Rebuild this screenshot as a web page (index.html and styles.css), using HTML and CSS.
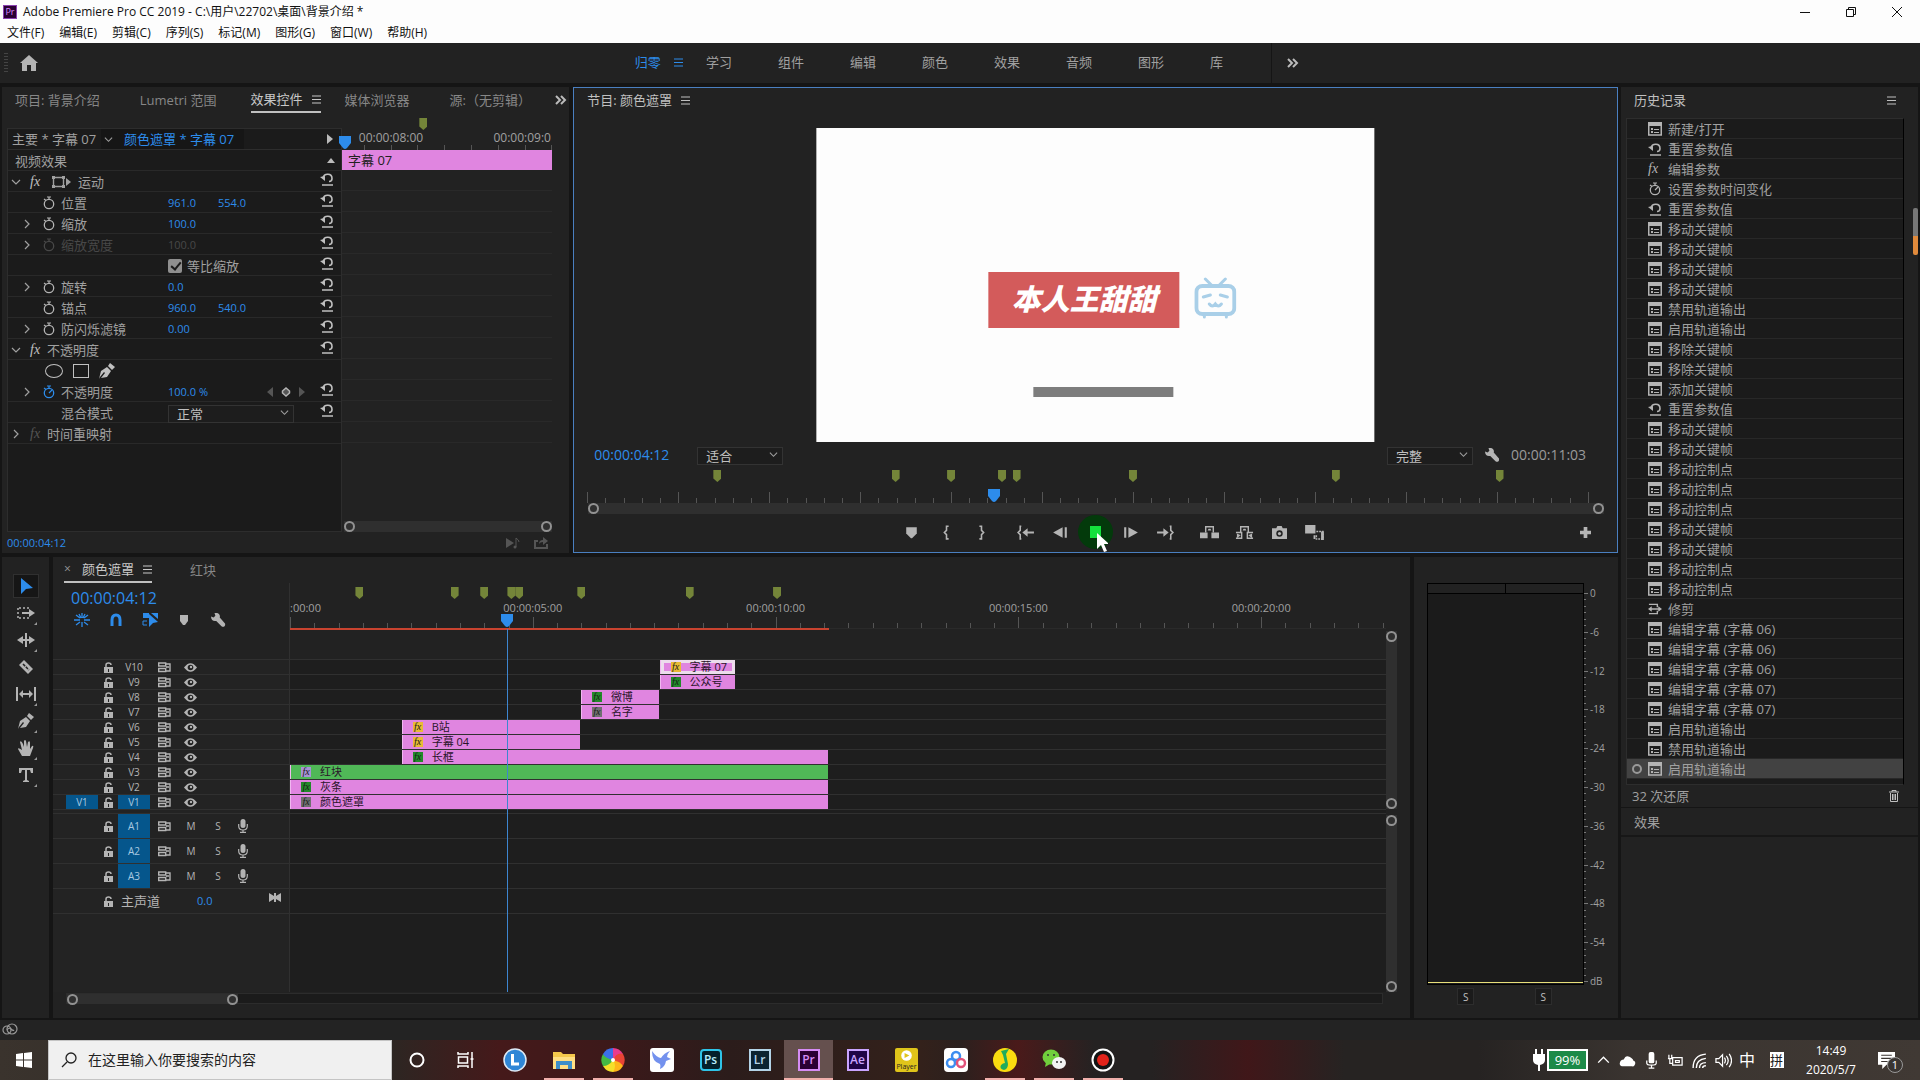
FILE: index.html
```html
<!DOCTYPE html>
<html lang="zh-CN">
<head>
  <meta charset="UTF-8" />
  <meta name="viewport" content="width=device-width, initial-scale=1.0"/>
  <title>Adobe Premiere Pro CC 2019</title>
  <link rel="stylesheet" href="styles.css">
</head>
<body>

  <!-- ICONOS -->
  <svg class="sprite" aria-hidden="true">
    <symbol id="i-menu" viewBox="0 0 9 9"><path d="M0 1h9M0 4.5h9M0 8h9" fill="none" stroke="currentColor"/></symbol>
    <symbol id="i-more" viewBox="0 0 12 10"><path d="M1 1l4 4-4 4M6 1l4 4-4 4" fill="none" stroke="currentColor" stroke-width="2"/></symbol>
    <symbol id="i-down" viewBox="0 0 10 10"><path d="M1 3l4 4 4-4" fill="none" stroke="currentColor" stroke-width="1.2"/></symbol>
    <symbol id="i-right" viewBox="0 0 10 10"><path d="M3 1l4 4-4 4" fill="none" stroke="currentColor" stroke-width="1.2"/></symbol>
    <symbol id="i-reset" viewBox="0 0 14 14"><path d="M3 6C4 1 12 1 12 6.500c0 2-1.500 3-3 3M2 13h11" fill="none" stroke="currentColor" stroke-width="1.600"/><path d="M0 5l5-1v5z" fill="currentColor"/></symbol>
    <symbol id="i-watch" viewBox="0 0 14 14"><circle cx="7" cy="8" r="4.700" fill="none" stroke="currentColor" stroke-width="1.300"/><path d="M5 1h4M7 1v3M2 3l2 1.500M7 8l3-3" fill="none" stroke="currentColor" stroke-width="1.200"/></symbol>
    <symbol id="i-clock" viewBox="0 0 14 14"><circle cx="7" cy="8" r="4.700" fill="none" stroke="currentColor" stroke-width="1.300"/><path d="M5 1h4M7 1v3M2 3l2 1.500" fill="none" stroke="currentColor" stroke-width="1.200"/></symbol>
    <symbol id="i-motion" viewBox="0 0 20 14"><path d="M2.500 2.500h10v9h-10z" fill="none" stroke="currentColor" stroke-width="1.400"/><path d="M1 1h3v3H1zM11 1h3v3h-3zM1 10h3v3H1zM11 10h3v3h-3zM15 3l5 4-5 4z" fill="currentColor"/></symbol>
    <symbol id="i-pen" viewBox="0 0 16 16"><path d="M0 16l2-8 6-4 4 4-4 6-6 1 4-5-1-1-4 5z" fill="currentColor"/><path d="M9 3l2-3 5 4-3 3z" fill="currentColor"/></symbol>
    <symbol id="i-wrench" viewBox="0 0 16 16"><path d="M0 4l3 1 2-2-1-3c4-1 7 2 6 5l6 7c1 3-2 5-4 3L6 9C3 10 0 8 0 4z" fill="currentColor"/></symbol>
    <symbol id="i-marker" viewBox="0 0 12 13"><path d="M0 0h12v7l-4 5q-2 2-4 0L0 7z" fill="currentColor"/></symbol>
    <symbol id="i-panel" viewBox="0 0 14 14"><path d="M.75 1h12.500v12H.75z" fill="none" stroke="currentColor" stroke-width="1.500"/><path d="M0 0h14v4H0zM3 6h2v2H3zM3 9h2v2H3zM6 7h5v1H6zM6 10h5v1H6z" fill="currentColor"/></symbol>
    <symbol id="i-trim" viewBox="0 0 15 14"><path d="M1 2h9v3M1 12h9V9M3 7h9" fill="none" stroke="currentColor" stroke-width="1.500"/><path d="M0 7l4-3v6zM15 7l-4-3v6z" fill="currentColor"/></symbol>
    <symbol id="i-lock" viewBox="0 0 9 11"><path d="M2 5V3q0-2 2.500-2T7 3" fill="none" stroke="currentColor" stroke-width="1.500"/><path d="M0 5h9v6H0z" fill="currentColor"/><path d="M4 7h1v3H4z" fill="#222"/></symbol>
    <symbol id="i-sync" viewBox="0 0 13 11"><path d="M.7 1h7v3h-7zM.7 6.500h7v3h-7zM8 2h4v7H8M8 5h3" fill="none" stroke="currentColor" stroke-width="1.400"/></symbol>
    <symbol id="i-eye" viewBox="0 0 13 9"><path d="M0 4.500Q6.500-4 13 4.500Q6.500 13 0 4.500z" fill="currentColor"/><circle cx="6.500" cy="4.500" r="2.800" fill="#222"/><circle cx="7" cy="4" r="1.200" fill="currentColor"/></symbol>
    <symbol id="i-mic" viewBox="0 0 10 14"><rect x="2.500" width="5" height="9" rx="2.500" fill="currentColor"/><path d="M.7 5v2q0 4 4.300 4t4.300-4V5M5 11v2M2 13.300h6" fill="none" stroke="currentColor" stroke-width="1.200"/></symbol>
    <symbol id="i-bilibili" viewBox="0 0 42 42"><g fill="none" stroke="#a9cfe8" stroke-width="4" stroke-linecap="round"><rect x="2" y="9" width="38" height="28" rx="6"/><path d="M11 2l6 6M31 2l-6 6M9 20l7-2M33 20l-7-2M15 27q3 4 6 0q3 4 6 0M10 40v-1M32 40v-1" stroke-width="3"/></g></symbol>
  </svg>

  <!-- VENTANA -->
  <header class="window-bar">
    <div class="title-row">
      <span class="app-logo">Pr</span>
      <span class="title">Adobe Premiere Pro CC 2019 - C:\用户\22702\桌面\背景介绍 *</span>
      <div class="window-buttons">
        <button aria-label="最小化"><svg viewBox="0 0 10 10"><path d="M0 5.500h10"/></svg></button>
        <button aria-label="还原"><svg viewBox="0 0 10 10"><path d="M.5 2.500h7v7h-7zM2.500 2.500v-2h7v7h-2"/></svg></button>
        <button aria-label="关闭"><svg viewBox="0 0 10 10"><path d="M0 0l10 10M10 0L0 10"/></svg></button>
      </div>
    </div>
    <nav class="menu-row">
      <button>文件(F)</button><button>编辑(E)</button><button>剪辑(C)</button><button>序列(S)</button><button>标记(M)</button><button>图形(G)</button><button>窗口(W)</button><button>帮助(H)</button>
    </nav>
  </header>

  <div class="workspace-bar">
    <span class="grip"></span>
    <button class="home" aria-label="主页"><svg viewBox="0 0 18 16"><path d="M9 0l9 8h-2v8h-5v-6H7v6H2V8H0z" fill="currentColor"/></svg></button>
    <nav class="workspaces">
      <button class="active">归零 <svg><use href="#i-menu"/></svg></button>
      <button>学习</button><button>组件</button><button>编辑</button><button>颜色</button><button>效果</button><button>音频</button><button>图形</button><button>库</button>
    </nav>
    <button class="more" aria-label="更多"><svg><use href="#i-more"/></svg></button>
  </div>

  <main class="workspace">
    <div class="left-side">
      <div class="top-row">

        <!-- CONTROLES DE EFECTOS -->
        <section class="panel effects">
          <div class="tabs">
            <button>项目: 背景介绍</button>
            <button>Lumetri 范围</button>
            <button class="active">效果控件 <svg><use href="#i-menu"/></svg></button>
            <button>媒体浏览器</button>
            <button class="source">源:（无剪辑）</button>
            <svg class="more-tabs"><use href="#i-more"/></svg>
          </div>
          <div class="effects-body">
            <div class="props">
              <div class="props-head">
                <span class="master">主要 * 字幕 07</span>
                <span class="clip-name"><svg><use href="#i-down"/></svg>颜色遮罩 * 字幕 07</span>
                <span class="tri-right"></span>
              </div>
              <div class="props-row section"><span>视频效果</span><span class="tri-up"></span></div>
              <div class="props-row group"><svg class="arrow"><use href="#i-down"/></svg><i class="fx">fx</i><svg class="motion"><use href="#i-motion"/></svg><span>运动</span><svg class="reset"><use href="#i-reset"/></svg></div>
              <div class="props-row"><svg class="arrow hidden"><use href="#i-right"/></svg><svg class="watch"><use href="#i-clock"/></svg><span class="label">位置</span><b>961.0</b><b>554.0</b><svg class="reset"><use href="#i-reset"/></svg></div>
              <div class="props-row"><svg class="arrow"><use href="#i-right"/></svg><svg class="watch"><use href="#i-clock"/></svg><span class="label">缩放</span><b>100.0</b><svg class="reset"><use href="#i-reset"/></svg></div>
              <div class="props-row off"><svg class="arrow"><use href="#i-right"/></svg><svg class="watch"><use href="#i-clock"/></svg><span class="label">缩放宽度</span><b>100.0</b><svg class="reset"><use href="#i-reset"/></svg></div>
              <div class="props-row"><label class="check"><input type="checkbox" checked>等比缩放</label><svg class="reset"><use href="#i-reset"/></svg></div>
              <div class="props-row"><svg class="arrow"><use href="#i-right"/></svg><svg class="watch"><use href="#i-clock"/></svg><span class="label">旋转</span><b>0.0</b><svg class="reset"><use href="#i-reset"/></svg></div>
              <div class="props-row"><svg class="arrow hidden"><use href="#i-right"/></svg><svg class="watch"><use href="#i-clock"/></svg><span class="label">锚点</span><b>960.0</b><b>540.0</b><svg class="reset"><use href="#i-reset"/></svg></div>
              <div class="props-row"><svg class="arrow"><use href="#i-right"/></svg><svg class="watch"><use href="#i-clock"/></svg><span class="label">防闪烁滤镜</span><b>0.00</b><svg class="reset"><use href="#i-reset"/></svg></div>
              <div class="props-row group"><svg class="arrow"><use href="#i-down"/></svg><i class="fx">fx</i><span>不透明度</span><svg class="reset"><use href="#i-reset"/></svg></div>
              <div class="props-row masks"><span class="mask-round"></span><span class="mask-box"></span><svg><use href="#i-pen"/></svg></div>
              <div class="props-row"><svg class="arrow"><use href="#i-right"/></svg><svg class="watch on"><use href="#i-watch"/></svg><span class="label">不透明度</span><b>100.0 %</b>
                <svg class="keys" viewBox="0 0 38 10"><path d="M6 0v10L0 5zM32 0v10l6-5z" fill="#555"/><path d="M15.500 4l3.500-3 3.500 3v2L19 9l-3.500-3z" fill="#555" stroke="#b5b5b5" stroke-width="1.500"/></svg>
                <svg class="reset"><use href="#i-reset"/></svg></div>
              <div class="props-row"><label class="label blend" for="blend">混合模式</label>
                <span class="select"><select id="blend"><option>正常</option></select><svg><use href="#i-down"/></svg></span>
                <svg class="reset"><use href="#i-reset"/></svg></div>
              <div class="props-row group off-fx"><svg class="arrow"><use href="#i-right"/></svg><i class="fx">fx</i><span>时间重映射</span></div>
            </div>
            <div class="keyframes">
              <div class="mini-ruler" id="miniRuler">
                <span class="stamp first">00:00:08:00</span><span class="stamp second">00:00:09:0</span>
              </div>
              <div class="mini-clip">字幕 07</div>
              <div class="key-lines"></div>
              <div class="hbar"><span></span><span></span></div>
            </div>
          </div>
          <div class="effects-foot">
            <span>00:00:04:12</span>
            <svg viewBox="0 0 14 12"><path d="M0 1l8 5-8 5z" fill="currentColor"/><path d="M10 10V1q3 2 3 4" fill="none" stroke="currentColor"/><circle cx="9" cy="10" r="1.500" fill="currentColor"/></svg>
            <svg viewBox="0 0 14 12"><path d="M4 4H1v7h12V7" fill="none" stroke="currentColor" stroke-width="2"/><path d="M5 7q0-4 4-4V0l5 4-5 4V5q-3 0-4 2z" fill="currentColor"/></svg>
          </div>
        </section>

        <!-- MONITOR DE PROGRAMA -->
        <section class="panel program">
          <div class="tabs"><button class="bright">节目: 颜色遮罩 <svg><use href="#i-menu"/></svg></button></div>
          <div class="screen">
            <svg viewBox="0 0 558 314">
              <rect width="558" height="314" fill="#fdfdfd"/>
              <rect x="172" y="144" width="191" height="56" fill="#d35b5b"/>
              <text x="268" y="182" class="caption">本人王甜甜</text>
              <use href="#i-bilibili" x="378" y="149" width="42" height="42"/>
              <rect x="217" y="259" width="140" height="10" fill="#7d7d7d"/>
            </svg>
          </div>
          <div class="info-row">
            <span class="timecode">00:00:04:12</span>
            <span class="select"><select aria-label="缩放级别"><option>适合</option></select><svg><use href="#i-down"/></svg></span>
            <span class="select end"><select aria-label="回放分辨率"><option>完整</option></select><svg><use href="#i-down"/></svg></span>
            <svg class="wrench"><use href="#i-wrench"/></svg>
            <span class="timecode duration">00:00:11:03</span>
          </div>
          <div class="ruler" id="programRuler"></div>
          <div class="hbar"><span></span><span></span></div>
          <div class="transport">
            <div class="transport-keys">
              <button aria-label="添加标记"><svg viewBox="0 0 18 14"><path d="M4 2h10v6l-4 4q-1 1-2 0L4 8z"/></svg></button>
              <button aria-label="标记入点"><svg viewBox="0 0 18 14"><path d="M11 1H9v4L7 7l2 2v4h2" class="line"/></svg></button>
              <button aria-label="标记出点" class="wide-r"><svg viewBox="0 0 18 14"><path d="M7 1h2v4l2 2-2 2v4H7" class="line"/></svg></button>
              <button aria-label="转到入点"><svg viewBox="0 0 18 14"><path d="M5 1H4v4L2 7l2 2v4h1" class="line"/><path d="M6 7l5-4v3h6v2h-6v3z"/></svg></button>
              <button aria-label="后退一帧"><svg viewBox="0 0 18 14"><path d="M11 2v10L2 7zM13 2h2v10h-2z"/></svg></button>
              <button aria-label="停止" class="stop"><span></span><svg viewBox="0 0 12 19"><path d="M1 0v16l4-4 3 7 3-1-3-7h5z"/></svg></button>
              <button aria-label="前进一帧"><svg viewBox="0 0 18 14"><path d="M7 2v10l9-5zM3 2h2v10H3z"/></svg></button>
              <button aria-label="转到出点"><svg viewBox="0 0 18 14"><path d="M13 1h1v4l2 2-2 2v4h-1" class="line"/><path d="M12 7L7 3v3H1v2h6v3z"/></svg></button>
              <button aria-label="提升" class="wide-l"><svg viewBox="0 0 20 14"><path d="M0 7h8v6H0zM12 7h8v6h-8zM9 3h2l1 2H8z"/><path d="M6 7V1h8v6" class="line"/></svg></button>
              <button aria-label="提取"><svg viewBox="0 0 20 14"><path d="M9 3h2l1 2H8zM2 8l4 2-4 3zM18 8l-4 2 4 3z"/><path d="M6 7V1h8v6M1 7h6v6H1M19 7h-6v6h6" class="line"/></svg></button>
              <button aria-label="导出帧"><svg viewBox="0 0 16 14"><path d="M1 3h4l1-2h4l1 2h4v10H1z"/><circle cx="8" cy="8" r="3" fill="#222"/><circle cx="8" cy="8" r="1.500"/></svg></button>
              <button aria-label="比较视图"><svg viewBox="0 0 20 16"><path d="M0 0h11v9H0zM9 11h2v4H9zM17 7h3v9h-3z"/><path d="M12 7h7v8h-7v-4" class="line" stroke-dasharray="2 1"/></svg></button>
            </div>
            <button class="plus" aria-label="按钮编辑器"><svg viewBox="0 0 12 12"><path d="M4 0h4v4h4v4H8v4H4V8H0V4h4z"/></svg></button>
          </div>
        </section>
      </div>

      <div class="bottom-row">
        <!-- HERRAMIENTAS -->
        <section class="panel tools">
          <button class="active" aria-label="选择工具"><svg viewBox="0 0 20 20"><path d="M5 2v16l5-5 7-1z"/></svg></button>
          <button aria-label="向前选择轨道工具"><svg viewBox="0 0 20 20"><path d="M3 5h12M3 15h10M2 5v11" fill="none" stroke="currentColor" stroke-width="1.500" stroke-dasharray="2 2"/><path d="M6 9h7V6l6 4-6 4v-3H6z"/></svg></button>
          <button aria-label="波纹编辑工具"><svg viewBox="0 0 20 20"><path d="M9 3h2v14H9zM1 10l6-4v3h6V6l6 4-6 4v-3H7v3z"/></svg></button>
          <button aria-label="剃刀工具"><svg viewBox="0 0 20 20"><path d="M8 3l9 9-5 5-9-9z"/><path d="M7 7l6 6" stroke="#222" stroke-width="1.500" stroke-dasharray="3 1"/></svg></button>
          <button aria-label="外滑工具"><svg viewBox="0 0 20 20"><path d="M0 3h2v14H0zM18 3h2v14h-2zM3 10l4-4v3h6V6l4 4-4 4v-3H7v3z"/></svg></button>
          <button aria-label="钢笔工具"><svg viewBox="-2 -2 20 20"><use href="#i-pen" width="16" height="16"/></svg></button>
          <button aria-label="手形工具"><svg viewBox="0 0 20 20"><path d="M6 18l-4-7q0-2 4 1L4 4q1-2 3 2l1 3V3q1-2 2 0l1 6 1-5q2-2 2 1v6l2-3q2-1 1 2l-3 8z"/></svg></button>
          <button aria-label="文字工具"><svg viewBox="0 0 20 20"><path d="M3 3h14v5h-2l-1-3h-3v10l2 1v1H7v-1l2-1V5H6L5 8H3z"/></svg></button>
        </section>

        <!-- LINEA DE TIEMPO -->
        <section class="panel timeline">
          <div class="tabs">
            <button class="active"><small>×</small>颜色遮罩 <svg><use href="#i-menu"/></svg></button>
            <button>红块</button>
          </div>
          <div class="tl-body">
            <div class="tl-main">
              <div class="tl-head">
                <div class="tl-controls">
                  <span class="tl-time">00:00:04:12</span>
                  <div class="tl-icons">
                    <svg viewBox="0 0 16 14"><path d="M8 0v5M8 9v5M0 7h6M10 7h6M2 2l4 3M14 2l-4 3M2 12l4-3M14 12l-4-3M5 1l2 4M11 1L9 5" fill="none" stroke="currentColor" stroke-width="1.300"/></svg>
                    <svg viewBox="0 0 16 14"><path d="M4 13V7q0-5 4-5t4 5v6" fill="none" stroke="currentColor" stroke-width="3"/></svg>
                    <svg viewBox="0 0 16 14"><path d="M1 0h6v5H1zM9 0h7v6zM7 1v13l4-4 5-1z" fill="currentColor"/><path d="M1 8h4M1 12h4M1 8v4" fill="none" stroke="currentColor"/></svg>
                    <svg viewBox="-4 -1 16 14" class="plain"><path d="M0 1h8v6l-3 4H3L0 7z" fill="currentColor"/></svg>
                    <svg class="plain"><use href="#i-wrench"/></svg>
                  </div>
                </div>
                <div class="ruler tl-ruler" id="timelineRuler"></div>
              </div>
              <div id="tracks"></div>
              <div class="track rest"><div class="track-head"></div><div class="lane"></div></div>
              <div class="tl-overlay"><span id="playLine"></span></div>
            </div>
            <div class="tl-scroll">
              <div class="vbar video"><span></span><span></span></div>
              <div class="vbar audio"><span></span><span></span></div>
            </div>
          </div>
          <div class="zoom-bar"><div class="hbar"><span></span><span></span></div></div>
        </section>

        <!-- MEDIDORES -->
        <section class="panel meters">
          <div class="meter-row">
            <div class="meter-box"><div class="peak"></div><div class="peak"></div><div class="level"></div><div class="level"></div></div>
            <div class="scale" id="scale"></div>
          </div>
          <div class="solo-row"><button>S</button><button>S</button></div>
        </section>
      </div>
    </div>

    <!-- HISTORIAL -->
    <section class="panel history">
      <div class="tabs"><button class="bright">历史记录</button><svg class="panel-menu"><use href="#i-menu"/></svg></div>
      <ul id="historyList"></ul>
      <div class="history-foot"><span>32 次还原</span>
        <svg viewBox="0 0 10 12"><path d="M0 2h10M3 2V.5h4V2M1.500 3v8.500h7V3M3.500 4v6M5 4v6M6.500 4v6" fill="none" stroke="currentColor"/></svg></div>
      <div class="effects-tab"><button>效果</button></div>
      <span class="side-scroll"></span>
    </section>
  </main>

  <div class="status-bar"><svg viewBox="0 0 16 12"><g fill="none" stroke="#999" stroke-width="1.200"><circle cx="5" cy="7" r="4"/><circle cx="10" cy="6" r="5"/><path d="M5 7q2-3 4-1t3 1"/></g></svg></div>

  <!-- BARRA DE TAREAS -->
  <footer class="taskbar">
    <button class="start" aria-label="开始"><svg viewBox="0 0 16 16"><path d="M0 2l7-1v6.500H0zM8 1l8-1v7.500H8zM0 8.500h7V15l-7-1zM8 8.500h8V16l-8-1z" fill="#fff"/></svg></button>
    <label class="search"><svg viewBox="0 0 16 16"><path d="M6 10L1 15" /><circle cx="10" cy="6" r="5"/></svg><input type="text" placeholder="在这里输入你要搜索的内容" aria-label="搜索"></label>
    <div class="apps">
      <button aria-label="Cortana"><svg viewBox="0 0 24 24"><circle cx="12" cy="12" r="6.500" fill="none" stroke="#fff" stroke-width="2"/></svg></button>
      <button aria-label="任务视图"><svg viewBox="0 0 24 24"><path d="M4 4v2h10V4M4 20v-2h10v2M4.500 9h9v6h-9zM18 4v16M16.500 11h3" fill="none" stroke="#fff" stroke-width="1.500"/></svg></button>
      <button aria-label="L"><svg viewBox="0 0 24 24"><circle cx="12" cy="12" r="11" fill="#2f86d6" stroke="#dfeaf5" stroke-width="1.500"/><path d="M9.500 6v10H16" fill="none" stroke="#fff" stroke-width="3"/></svg></button>
      <button class="open" aria-label="文件资源管理器"><svg viewBox="0 0 24 24"><path d="M1 4h8l2 2h12v15H1z" fill="#f5c84c"/><path d="M1 9h22v12H1z" fill="#ffdf83"/><path d="M4 21v-8h16v8h-4v-4H8v4z" fill="#3d8fc9"/></svg></button>
      <button class="open" aria-label="浏览器"><svg viewBox="0 0 24 24"><path d="M12 12Q8 4 12 0A12 12 0 0 1 22 6z" fill="#e83b8d"/><path d="M12 12Q16 4 22 6a12 12 0 0 1 0 12z" fill="#e94435"/><path d="M12 12q8 2 10 6a12 12 0 0 1-10 6z" fill="#ffb61a"/><path d="M12 12q4 6 0 12A12 12 0 0 1 2 18z" fill="#f5e02a"/><path d="M12 12Q8 18 2 18A12 12 0 0 1 2 6z" fill="#43b944"/><path d="M12 12Q4 10 2 6A12 12 0 0 1 12 0z" fill="#3b6fe8"/><circle cx="12" cy="12" r="2" fill="#fff"/></svg></button>
      <button aria-label="迅雷"><svg viewBox="0 0 24 24"><rect width="24" height="24" rx="3" fill="#fff"/><path d="M2 3q5 7 9 7 3-5 9-7-3 3-3 6l4 2-5 2q-1 6-6 8 1-3 0-5Q2 14 2 3z" fill="#7391ee"/></svg></button>
      <button aria-label="Photoshop"><span class="adobe ps">Ps</span></button>
      <button aria-label="Lightroom"><span class="adobe lr">Lr</span></button>
      <button class="open current" aria-label="Premiere Pro"><span class="adobe pr">Pr</span></button>
      <button aria-label="After Effects"><span class="adobe ae">Ae</span></button>
      <button aria-label="Player"><span class="player"><svg viewBox="0 0 24 14"><circle cx="12" cy="7.500" r="5.500" fill="#fff"/><path d="M10 5l5 2.500-5 2.500z" fill="#e0c41a"/></svg>Player</span></button>
      <button aria-label="百度网盘"><svg viewBox="0 0 24 24"><rect width="24" height="24" rx="4" fill="#fff"/><g fill="none" stroke-width="2.500"><circle cx="12" cy="8" r="4" stroke="#3c8df0"/><circle cx="7" cy="15" r="4" stroke="#3c8df0"/><circle cx="17" cy="15" r="4" stroke="#e2527a"/></g></svg></button>
      <button class="open" aria-label="QQ音乐"><svg viewBox="0 0 24 24"><circle cx="12" cy="12" r="12" fill="#fadc10"/><path d="M8 3l8-2-3 5 2 10q0 5-4 6-5-1-3-5 2-2 4-2L10 7z" fill="#21ab5c"/></svg></button>
      <button class="open" aria-label="微信"><svg viewBox="0 0 24 24"><ellipse cx="9" cy="9" rx="8.500" ry="7.500" fill="#71cf3c"/><path d="M3 19l1-5 4 2z" fill="#71cf3c"/><ellipse cx="17" cy="15" rx="7" ry="6" fill="#f3f3f3"/><g fill="#333"><circle cx="6" cy="7" r="1"/><circle cx="12" cy="7" r="1"/><circle cx="15" cy="14" r="1"/><circle cx="19" cy="14" r="1"/></g></svg></button>
      <button class="open" aria-label="录屏"><svg viewBox="0 0 24 24"><circle cx="12" cy="12" r="10.500" fill="#141414" stroke="#fff" stroke-width="2"/><circle cx="12" cy="12" r="6" fill="#e2231a"/></svg></button>
    </div>
    <div class="tray">
      <span class="battery"><svg viewBox="0 0 14 22"><path d="M3 0h2v5h4V0h2v5h2v6q0 4-5 5v6H6v-6q-5-1-5-5V5h2z" fill="#fff"/></svg><span>99%</span></span>
      <svg viewBox="0 0 16 16"><path d="M3 10l5-5 5 5" class="line"/></svg>
      <svg viewBox="0 0 18 16"><path d="M3 14q-3-1-2-4t4-3q2-5 6-3t4 4q3 1 2 4t-3 2z"/></svg>
      <svg viewBox="0 0 16 18"><rect x="5" width="6" height="12" rx="2"/><path d="M3 9v3q0 2 5 2t5-2V9M8 14v3M5 17h6" class="line"/></svg>
      <svg viewBox="0 0 18 16"><path d="M6 5h10v8H6zM2 2v4M5 2v4M1 6h5M3 6v5h3M9 8h4v2H9z" class="line"/></svg>
      <svg viewBox="0 0 16 16"><path d="M2 15Q2 3 14 2M5 15q0-8 9-9M8 15q0-5 6-5M11 15q0-2 3-2" class="line"/></svg>
      <svg viewBox="0 0 18 16"><path d="M1 6h3l4-4v12L4 10H1zM10 5q2 3 0 6M12 3q4 5 0 10M15 1q5 7 0 14" class="line"/></svg>
      <span class="ime">中</span>
      <span class="pinyin">拼</span>
      <time class="clock">14:49<br>2020/5/7</time>
      <span class="notice"><svg viewBox="0 0 16 16"><path d="M0 0h16v12H8l-4 4v-4H0z" fill="#fff"/><path d="M3 3h10M3 6h10M3 9h6" stroke="#3a3532"/></svg><em>1</em></span>
    </div>
  </footer>

  <script src="script.js"></script>
</body>
</html>
```
FILE: styles.css
```css
* {
  box-sizing: border-box;
}
body {
  margin: 0;
  height: 100vh;
  display: flex;
  flex-direction: column;
  background: #151515;
  color: #a0a0a0;
  font-family: "Open Sans", "Noto Sans CJK SC", sans-serif;
  font-size: 13px;
  line-height: 20px;
  overflow: hidden;
}
button {
  background: none;
  border: none;
  padding: 0;
  margin: 0;
  color: inherit;
  font: inherit;
  white-space: nowrap;
}
svg {
  display: block;
  flex: none;
}
ul {
  list-style: none;
  margin: 0;
  padding: 0;
}
.sprite {
  position: absolute;
  width: 0;
  height: 0;
}

/* barra de la ventana */
.window-bar {
  background: #fdfdfd;
  color: #111;
  height: 43px;
  font-size: 12px;
  flex: none;
}
.title-row {
  display: flex;
  align-items: center;
  height: 23px;
  padding-left: 3px;
}
.app-logo {
  width: 14px;
  height: 14px;
  background: #2a0033;
  border: 1px solid #8a3fb0;
  color: #d98cff;
  font-size: 9px;
  line-height: 11px;
  text-align: center;
  margin-right: 6px;
}
.window-buttons {
  margin-left: auto;
  display: flex;
}
.window-buttons button {
  width: 46px;
  height: 20px;
  display: flex;
  align-items: center;
  justify-content: center;
}
.window-buttons svg {
  width: 10px;
  height: 10px;
  fill: none;
  stroke: #111;
}
.menu-row {
  display: flex;
  gap: 15px;
  padding-left: 7px;
  line-height: 20px;
}

/* espacios de trabajo */
.workspace-bar {
  display: flex;
  align-items: center;
  height: 40px;
  background: #222;
  flex: none;
  margin-bottom: 4px;
}
.grip {
  width: 4px;
  height: 20px;
  margin-left: 4px;
  background: repeating-linear-gradient(#444 0 1px, #222 1px 3px);
}
.home {
  margin-left: 12px;
  color: #b4b4b4;
}
.home svg {
  width: 18px;
  height: 16px;
}
.workspaces {
  flex: 1;
  display: flex;
  justify-content: flex-end;
  gap: 46px;
  padding: 0 48px 2px 0;
}
.workspaces .active {
  display: flex;
  align-items: center;
  gap: 13px;
  color: #2d8ceb;
  margin-right: -23px;
}
.workspaces svg, .tabs button svg, .panel-menu {
  width: 9px;
  height: 9px;
}
.more {
  border-left: 1px solid #151515;
  flex: 0 1 649px;
  height: 40px;
  padding-left: 15px;
  color: #bbb;
}
.more svg, .more-tabs {
  width: 12px;
  height: 10px;
}

/* paneles */
.workspace {
  flex: 1;
  min-height: 0;
  display: flex;
  gap: 3px;
  padding: 0 2px;
}
.left-side {
  flex: 1;
  min-width: 0;
  display: flex;
  flex-direction: column;
  gap: 4px;
}
.top-row {
  flex: 466;
  min-height: 0;
  display: flex;
  gap: 4px;
}
.bottom-row {
  flex: 461;
  min-height: 0;
  display: flex;
  gap: 4px;
}
.panel {
  background: #222;
  display: flex;
  flex-direction: column;
  min-width: 0;
}
.tabs {
  display: flex;
  align-items: center;
  height: 26px;
  padding-left: 13px;
  color: #878787;
  flex: none;
}
.tabs button {
  display: flex;
  align-items: center;
  gap: 9px;
  height: 26px;
}
.tabs .active {
  color: #c8c8c8;
  border-bottom: 2px solid #c0c0c0;
}
.tabs .bright {
  color: #c0c0c0;
}

/* controles de efectos */
.effects {
  flex: 568;
}
.effects .tabs {
  gap: 24px;
}
.effects .tabs button:first-child {
  margin-right: 16px;
}
.effects .tabs button:nth-child(2) {
  margin-right: 10px;
}
.effects .tabs .source {
  margin-left: 16px;
}
.more-tabs {
  margin-left: auto;
  margin-right: 2px;
  color: #bbb;
}
.effects-body {
  flex: 1;
  min-height: 0;
  display: flex;
  margin: 15px 17px 0 5px;
}
.props {
  width: 335px;
  background: #1b1b1b;
  border: 1px solid #2d2d2d;
  display: flex;
  flex-direction: column;
}
.props-head {
  display: flex;
  align-items: center;
  height: 21px;
  border-bottom: 1px solid #2d2d2d;
  padding-left: 4px;
}
.master {
  width: 89px;
}
.clip-name {
  display: flex;
  align-items: center;
  gap: 11px;
  width: 143px;
  height: 20px;
  padding-left: 3px;
  background: #161616;
  color: #2d8ceb;
}
.clip-name svg {
  width: 9px;
  height: 9px;
  color: #a0a0a0;
}
.tri-right {
  margin-left: auto;
  margin-right: 8px;
  border-left: 6px solid #bbb;
  border-top: 5px solid transparent;
  border-bottom: 5px solid transparent;
}
.tri-up {
  margin-left: auto;
  margin-right: 6px;
  border-bottom: 5px solid #bbb;
  border-left: 4px solid transparent;
  border-right: 4px solid transparent;
}
.props-row {
  display: flex;
  align-items: center;
  height: 21px;
  border-bottom: 1px solid #292929;
  padding: 1px 0 0 14px;
}
.props-row.section {
  padding-left: 7px;
}
.props-row.group {
  padding-left: 3px;
}
.arrow {
  width: 10px;
  height: 10px;
}
.hidden {
  visibility: hidden;
}
.props .fx {
  width: 17px;
  margin: 0 0 0 9px;
}
.fx {
  font-family: "Liberation Serif", serif;
  font-size: 14px;
  color: #c0c0c0;
}
.off-fx .fx {
  color: #555;
}
.motion {
  width: 20px;
  height: 14px;
  margin: 0 7px 0 4px;
}
.watch {
  width: 14px;
  height: 14px;
  margin: 0 5px 0 10px;
  color: #b4b4b4;
}
.watch.on {
  color: #2d8ceb;
}
.label {
  width: 107px;
}
.props-row b {
  font-weight: 400;
  font-size: 11px;
  width: 50px;
  color: #2d8ceb;
  white-space: nowrap;
}
.reset {
  width: 14px;
  height: 14px;
  margin-left: auto;
  margin-right: 7px;
  margin-bottom: 6px;
  color: #c0c0c0;
}
.off span, .off .watch, .off b {
  color: #484848;
}
.check {
  display: flex;
  align-items: center;
  gap: 5px;
  padding-left: 146px;
}
.check input {
  appearance: none;
  width: 14px;
  height: 14px;
  margin: 0;
  border-radius: 2px;
  background: #8f8f8f;
}
.check input:checked::after {
  content: "";
  display: block;
  width: 4px;
  height: 8px;
  margin: 1px 0 0 5px;
  border: solid #1b1b1b;
  border-width: 0 2px 2px 0;
  transform: rotate(40deg);
}
.masks {
  padding-left: 37px;
  gap: 10px;
  border-bottom-color: transparent;
}
.mask-round {
  width: 18px;
  height: 14px;
  border: 1px solid #c0c0c0;
  border-radius: 50%;
}
.mask-box {
  width: 16px;
  height: 14px;
  border: 1px solid #c0c0c0;
}
.masks svg {
  width: 16px;
  height: 16px;
  color: #c0c0c0;
}
.keys {
  width: 38px;
  height: 10px;
  margin-left: 49px;
}
.blend {
  padding-left: 39px;
  width: 146px;
}
.select {
  position: relative;
  width: 126px;
  height: 18px;
}
.select select {
  appearance: none;
  width: 100%;
  height: 100%;
  padding: 0 8px;
  background: #1d1d1d;
  border: 1px solid #333;
  color: #c0c0c0;
  font: inherit;
  line-height: 16px;
}
.select svg {
  position: absolute;
  right: 5px;
  top: 4px;
  width: 9px;
  height: 9px;
}
.keyframes {
  flex: 1;
  min-width: 0;
  display: flex;
  flex-direction: column;
}
.mini-ruler {
  position: relative;
  height: 34px;
  margin-top: -12px;
  font-size: 12px;
  line-height: 16px;
}
.stamp {
  position: absolute;
  top: 14px;
}
.first {
  left: 8%;
}
.second {
  left: 72%;
}
.mini-clip {
  height: 20px;
  padding-left: 6px;
  background: #e085e0;
  color: #222;
}
.key-lines {
  height: 274px;
  background: repeating-linear-gradient(transparent 0 20px, #292929 20px 21px);
}
.hbar {
  display: flex;
  justify-content: space-between;
  align-items: center;
  height: 11px;
  background: #2f2f2f;
}
.hbar span, .vbar span {
  width: 11px;
  height: 11px;
  border: 2px solid #929292;
  border-radius: 50%;
}
.keyframes .hbar {
  margin-top: auto;
  margin-left: 2px;
}
.effects-foot {
  display: flex;
  align-items: center;
  gap: 14px;
  height: 21px;
  margin: 0 21px 0 5px;
  font-size: 11px;
  color: #555;
  flex: none;
}
.effects-foot span {
  color: #2d8ceb;
  margin-right: auto;
}
.effects-foot svg {
  width: 14px;
  height: 12px;
}

/* monitor de programa */
.program {
  flex: 1044;
  border: 1px solid #4a7fc0;
}
.program .tabs {
  height: 24px;
  padding-left: 13px;
}
.screen {
  flex: 1;
  min-height: 0;
  margin-top: 16px;
}
.screen svg {
  width: 100%;
  height: 100%;
}
.caption {
  fill: #fff;
  font-family: "Noto Sans CJK SC", sans-serif;
  font-size: 29px;
  font-weight: 900;
  font-style: italic;
  text-anchor: middle;
}
.info-row {
  display: flex;
  align-items: center;
  height: 26px;
  padding: 0 29px 1px 20px;
}
.timecode {
  font-size: 14px;
  color: #2d8ceb;
  width: 103px;
}
.timecode.duration {
  color: #9a9a9a;
  width: 77px;
}
.info-row .select {
  width: 86px;
}
.info-row .end {
  margin-left: auto;
}
.wrench {
  width: 14px;
  height: 14px;
  margin: 0 12px;
  color: #b4b4b4;
}
.ruler {
  position: relative;
  height: 35px;
}
.program .ruler {
  margin: 0 12px 0 13px;
}
.tick {
  position: absolute;
  bottom: 0;
  width: 1px;
  height: 5px;
  background: #555;
}
.tick.major {
  height: 11px;
}
.mark {
  position: absolute;
  top: 2px;
  width: 8px;
  height: 12px;
  margin-left: -4px;
  background: #748539;
  clip-path: polygon(0 0, 100% 0, 100% 70%, 50% 100%, 0 70%);
}
.head {
  position: absolute;
  bottom: 1px;
  width: 12px;
  height: 13px;
  margin-left: -6px;
  color: #2d8ceb;
}
.program .hbar {
  margin: 0 13px 0 14px;
  flex: none;
}
.transport {
  display: grid;
  grid-template-columns: 1fr auto 1fr;
  align-items: center;
  height: 38px;
  padding-bottom: 2px;
}
.transport-keys {
  grid-column: 2;
  display: flex;
  padding-left: 35px;
}
.transport button {
  width: 35px;
  height: 34px;
  display: flex;
  align-items: center;
  justify-content: center;
}
.transport svg {
  width: 19px;
  height: 15px;
  fill: #b4b4b4;
}
.transport .line {
  fill: none;
  stroke: #b4b4b4;
  stroke-width: 1.5px;
}
.transport .wide-r {
  margin-right: 9px;
}
.transport .wide-l {
  margin-left: 9px;
}
.transport .stop {
  position: relative;
  background: #033a0b;
  border-radius: 50%;
}
.stop span {
  width: 11px;
  height: 12px;
  background: #14e03c;
}
.transport .stop svg {
  position: absolute;
  left: 18px;
  top: 18px;
  width: 12px;
  height: 19px;
  fill: #fff;
}
.transport .plus {
  justify-self: end;
  margin-right: 14px;
}
.plus svg {
  height: 11px;
}

/* herramientas */
.tools {
  flex: 0 0 47px;
  align-items: center;
  padding-top: 17px;
  gap: 3px;
  color: #b4b4b4;
}
.tools button {
  position: relative;
  width: 26px;
  height: 24px;
  padding: 2px 3px;
}
.tools svg {
  width: 20px;
  height: 20px;
  fill: currentColor;
}
.tools .active {
  background: #161616;
  border: 1px solid #303030;
  padding: 1px 2px;
  color: #2d8ceb;
}
.tools button:nth-child(n+2)::after {
  content: "";
  position: absolute;
  right: 2px;
  bottom: 0;
  border-left: 3px solid transparent;
  border-bottom: 3px solid #999;
}
.tools button:nth-child(4)::after {
  display: none;
}

/* linea de tiempo */
.timeline {
  flex: 1;
}
.timeline .tabs {
  gap: 38px;
  padding-left: 11px;
}
.timeline small {
  font-size: 12px;
  color: #999;
  margin-right: 2px;
}
.tl-body {
  flex: 1;
  min-height: 0;
  display: flex;
}
.tl-main {
  position: relative;
  flex: 1;
  min-width: 0;
  display: flex;
  flex-direction: column;
}
.tl-head {
  display: flex;
  height: 76px;
}
.tl-controls {
  width: 237px;
  padding: 4px 0 0 18px;
  border-right: 1px solid #303030;
}
.tl-time {
  display: block;
  font-size: 16px;
  line-height: 22px;
  color: #2d8ceb;
}
.tl-icons {
  display: flex;
  gap: 18px;
  padding: 4px 0 0 3px;
  color: #2d8ceb;
}
.tl-icons svg {
  width: 16px;
  height: 14px;
}
.tl-icons .plain {
  color: #b4b4b4;
}
.tl-ruler {
  flex: 1;
  height: 46px;
  border-bottom: 1px solid #2a2a2a;
}
.tl-ruler .mark {
  top: 4px;
}
.render-bar {
  position: absolute;
  left: 0;
  bottom: -2px;
  height: 2px;
  background: #c9432f;
}
.time-label {
  position: absolute;
  top: 17px;
  font-size: 11px;
  line-height: 16px;
  width: 60px;
  margin-left: -30px;
  text-align: center;
}
.time-label:first-child {
  margin-left: 0;
  text-align: left;
}
.track {
  display: flex;
  height: 15px;
  font-size: 10px;
}
.track.audio, .track.master-out {
  height: 25px;
}
.track.gap {
  height: 4px;
}
.track.rest {
  flex: 1;
}
.track-head {
  display: flex;
  align-items: center;
  width: 237px;
  padding-left: 13px;
  border-top: 1px solid #303030;
  border-right: 1px solid #303030;
  background: #232323;
  color: #b4b4b4;
}
.lane {
  position: relative;
  flex: 1;
  min-width: 0;
  border-top: 1px solid #303030;
  background: #1e1e1e;
}
.patch, .name {
  width: 32px;
  height: 100%;
  display: flex;
  align-items: center;
  justify-content: center;
}
.target {
  background: #05568c;
  color: #a9c9e0;
}
.track-head .i-lock {
  width: 9px;
  height: 11px;
  margin: 0 5px 0 6px;
}
.i-sync {
  width: 13px;
  height: 11px;
  margin: 0 13px 0 8px;
}
.i-eye {
  width: 13px;
  height: 9px;
}
.track-head button {
  width: 14px;
  margin-right: 13px;
  font-size: 10px;
}
.track-head .i-mic {
  width: 10px;
  height: 14px;
}
.master-out .name {
  width: 79px;
  font-size: 13px;
  justify-content: flex-start;
  padding-left: 3px;
}
.volume {
  font-size: 11px;
  width: 72px;
  color: #2d8ceb;
}
.i-ends {
  width: 12px;
  height: 9px;
  margin-bottom: 8px;
}
.clip {
  position: absolute;
  top: 0;
  display: flex;
  align-items: center;
  height: 14px;
  background: #e085e0;
  border-left: 1px solid #f0b8f0;
  color: #2a142a;
}
.clip.green {
  background: #50b857;
}
.clip.selected {
  box-shadow: inset 0 0 0 3px #ecdcec;
}
.clip-label {
  display: flex;
  align-items: center;
  gap: 9px;
  height: 14px;
  padding-left: 10px;
  font-size: 11px;
  line-height: 14px;
  white-space: nowrap;
}
.badge {
  width: 10px;
  height: 10px;
  font-size: 10px;
  line-height: 9px;
  text-align: center;
  color: #1a1a1a;
}
.badge.yellow {
  background: #e9bb35;
}
.badge.green {
  background: #22892a;
}
.badge.grey {
  background: #707070;
}
.badge.purple {
  background: #a893d6;
}
.tl-overlay {
  position: absolute;
  left: 237px;
  right: 0;
  top: 46px;
  bottom: 0;
}
#playLine {
  position: absolute;
  top: 0;
  bottom: 0;
  width: 1px;
  background: #3d86d0;
}
.tl-scroll {
  flex: 0 0 24px;
  padding-top: 48px;
  display: flex;
  flex-direction: column;
  gap: 6px;
}
.vbar {
  display: flex;
  flex-direction: column;
  justify-content: space-between;
  width: 11px;
  background: #2f2f2f;
}
.vbar.video {
  height: 178px;
}
.vbar.audio {
  flex: 1;
}
.zoom-bar {
  height: 11px;
  margin: 1px 27px 14px 13px;
  background: #1b1b1b;
  border: 1px solid #2c2c2c;
}
.zoom-bar .hbar {
  width: 13%;
  height: 10px;
}

/* medidores */
.meters {
  flex: 0 0 204px;
  padding: 26px 0 0 13px;
}
.meter-row {
  flex: 1;
  display: flex;
}
.meter-box {
  width: 157px;
  display: grid;
  grid-template-columns: 1fr 1fr;
  grid-template-rows: 10px 1fr;
  border: 1px solid #000;
  background: #1b1b1b;
}
.peak {
  background: #222;
  border-bottom: 1px solid #000;
}
.peak:first-child {
  border-right: 1px solid #000;
}
.level {
  border-bottom: 1px solid #e8df7a;
  margin-bottom: 1px;
}
.scale {
  position: relative;
  width: 34px;
  margin: 10px 0 4px;
}
.db-tick {
  position: absolute;
  left: 0;
  width: 2px;
  height: 1px;
  background: #777;
}
.db-tick.major {
  width: 4px;
}
.db {
  position: absolute;
  left: 6px;
  margin-top: -7px;
  font-size: 10px;
  line-height: 14px;
}
.solo-row {
  width: 155px;
  display: flex;
  justify-content: space-around;
  padding: 3px 0 13px;
}
.solo-row button {
  width: 17px;
  height: 17px;
  background: #1b1b1b;
  border: 1px solid #2d2d2d;
  color: #c0c0c0;
  font-size: 10px;
  line-height: 14px;
}

/* historial */
.history {
  flex: 0 0 297px;
  position: relative;
}
.panel-menu {
  margin-left: auto;
  margin-right: 22px;
  color: #c0c0c0;
}
.history ul {
  margin: 5px 14px 0 5px;
  padding-bottom: 5px;
  background: #1b1b1b;
  border: 1px solid #2d2d2d;
  border-right-color: #000;
  flex: none;
}
.history li {
  display: flex;
  align-items: center;
  height: 20px;
  gap: 6px;
  padding-left: 21px;
  border-bottom: 1px solid #282828;
}
.history li svg, .history li .fx {
  width: 14px;
  height: 14px;
  line-height: 14px;
  color: #b4b4b4;
}
.history li.current {
  background: #424242;
}
.current .dot {
  width: 10px;
  height: 10px;
  margin: 0 0 0 -16px;
  border: 2px solid #999;
  border-radius: 50%;
}
.history-foot {
  display: flex;
  justify-content: space-between;
  align-items: center;
  height: 23px;
  padding: 0 19px 0 11px;
  border-bottom: 1px solid #151515;
}
.history-foot svg {
  width: 10px;
  height: 12px;
  color: #c0c0c0;
}
.effects-tab {
  height: 29px;
  padding: 4px 13px;
  border-bottom: 2px solid #171717;
}
.side-scroll {
  position: absolute;
  right: 0;
  top: 121px;
  width: 5px;
  height: 47px;
  border-radius: 2px;
  background: linear-gradient(#777 60%, #e08a3c 60%);
}

.status-bar {
  height: 20px;
  margin-top: 2px;
  padding: 3px 2px;
  background: #232323;
  flex: none;
}
.status-bar svg {
  width: 16px;
  height: 12px;
}

/* barra de tareas */
.taskbar {
  display: flex;
  height: 40px;
  flex: none;
  color: #fff;
  background: linear-gradient(90deg, #3a332d 0, #2b2723 20%, #45191a 26%, #3c191a 32%, #2b1c1b 38%, #33211b 48%, #2b201e 50%, #4a1a1a 53%, #252222 57%, #252222 60%, #401719 65%, #262322 70%, #262322 77%, #3a3430 85%, #403934 100%);
}
.start {
  width: 48px;
  display: flex;
  align-items: center;
  justify-content: center;
}
.start svg {
  width: 16px;
  height: 16px;
}
.search {
  display: flex;
  align-items: center;
  gap: 11px;
  width: 344px;
  padding-left: 12px;
  background: #f0f0f0;
  border: 1px solid #c4c4c4;
}
.search svg {
  width: 16px;
  height: 16px;
  fill: none;
  stroke: #222;
  stroke-width: 1.3px;
}
.search input {
  flex: 1;
  min-width: 0;
  border: none;
  padding: 0;
  background: none;
  font: inherit;
  font-size: 14px;
}
.search input::placeholder {
  color: #222;
  opacity: 1;
}
.apps {
  display: flex;
}
.apps button {
  width: 49px;
  height: 40px;
  display: flex;
  align-items: center;
  justify-content: center;
}
.apps svg {
  width: 24px;
  height: 24px;
}
.apps .open {
  background: linear-gradient(#f0b0ac, #f0b0ac) center bottom / 40px 2px no-repeat;
}
.apps .current {
  background-color: #65504e;
  background-size: 100% 2px;
}
.adobe {
  width: 22px;
  height: 22px;
  border: 2px solid;
  font-size: 12px;
  line-height: 17px;
  font-weight: 600;
}
.ps {
  background: #03202c;
  color: #b8eefc;
  border-color: #2fc3e8;
  border-radius: 4px;
}
.lr {
  background: #0b2330;
  color: #b4d4e8;
}
.pr {
  background: #2a0033;
  color: #d58cf5;
}
.ae {
  background: #1f0547;
  color: #c9a4ff;
}
.player {
  width: 23px;
  height: 24px;
  background: #e0c41a;
  color: #222;
  font-size: 7px;
  line-height: 9px;
  border-radius: 2px;
}
.player svg {
  width: 23px;
  height: 14px;
}
.tray {
  margin-left: auto;
  display: flex;
  align-items: center;
  padding-right: 17px;
}
.tray svg {
  width: 17px;
  height: 17px;
  margin-right: 7px;
  fill: #fff;
}
.tray .line {
  fill: none;
  stroke: #fff;
  stroke-width: 1.3px;
}
.battery {
  display: flex;
  align-items: center;
  margin-right: 7px;
}
.tray .battery svg {
  width: 14px;
  height: 22px;
  margin-right: 1px;
}
.battery span {
  width: 41px;
  height: 22px;
  background: #1c8a48;
  border: 2px solid #fff;
  font-size: 13px;
  line-height: 18px;
  text-align: center;
}
.ime {
  width: 31px;
  font-size: 16px;
}
.pinyin {
  width: 14px;
  height: 16px;
  background: #fff;
  color: #222;
  font-size: 13px;
  line-height: 16px;
}
.clock {
  width: 94px;
  font-size: 12px;
  line-height: 19px;
  text-align: center;
}
.notice {
  position: relative;
  width: 25px;
}
.notice em {
  position: absolute;
  right: 0;
  top: 5px;
  width: 16px;
  height: 16px;
  border-radius: 50%;
  background: #3a3532;
  border: 1px solid #999;
  font-size: 11px;
  font-style: normal;
  line-height: 14px;
  text-align: center;
}
```
FILE: script.js
```js
const markers = [1.43, 3.39, 4, 4.56, 4.72, 6, 8.23, 10.03];
const playhead = 4.47;
const timelineSpan = 22.57;
const programSpan = 11.19;

const history = [
  ['panel', '新建/打开'], ['reset', '重置参数值'], ['fx', '编辑参数'], ['watch', '设置参数时间变化'], ['reset', '重置参数值'],
  ['panel', '移动关键帧'], ['panel', '移动关键帧'], ['panel', '移动关键帧'], ['panel', '移动关键帧'],
  ['panel', '禁用轨道输出'], ['panel', '启用轨道输出'], ['panel', '移除关键帧'], ['panel', '移除关键帧'],
  ['panel', '添加关键帧'], ['reset', '重置参数值'], ['panel', '移动关键帧'], ['panel', '移动关键帧'],
  ['panel', '移动控制点'], ['panel', '移动控制点'], ['panel', '移动控制点'], ['panel', '移动关键帧'], ['panel', '移动关键帧'],
  ['panel', '移动控制点'], ['panel', '移动控制点'], ['trim', '修剪'],
  ['panel', '编辑字幕 (字幕 06)'], ['panel', '编辑字幕 (字幕 06)'], ['panel', '编辑字幕 (字幕 06)'],
  ['panel', '编辑字幕 (字幕 07)'], ['panel', '编辑字幕 (字幕 07)'],
  ['panel', '启用轨道输出'], ['panel', '禁用轨道输出'], ['panel', '启用轨道输出']
];

const videoTracks = [
  { name: 'V10', clip: '字幕 07', from: 7.61, to: 9.16, badge: 'yellow', look: 'selected' },
  { name: 'V9', clip: '公众号', from: 7.61, to: 9.16, badge: 'green' },
  { name: 'V8', clip: '微博', from: 5.99, to: 7.59, badge: 'green' },
  { name: 'V7', clip: '名字', from: 5.99, to: 7.59, badge: 'grey' },
  { name: 'V6', clip: 'B站', from: 2.3, to: 5.97, badge: 'yellow' },
  { name: 'V5', clip: '字幕 04', from: 2.3, to: 5.97, badge: 'yellow' },
  { name: 'V4', clip: '长框', from: 2.3, to: 11.08, badge: 'green' },
  { name: 'V3', clip: '红块', from: 0, to: 11.08, badge: 'purple', look: 'green' },
  { name: 'V2', clip: '灰条', from: 0, to: 11.08, badge: 'green' },
  { name: 'V1', clip: '颜色遮罩', from: 0, to: 11.08, badge: 'grey' }
];

const icon = name => `<svg class="i-${name}"><use href="#i-${name}"/></svg>`;
const pct = (t, span) => (t / span * 100).toFixed(3) + '%';

function ticks(count, step, every, span) {
  let html = '';
  for (let i = 0; i < count; i++) {
    html += `<span class="tick ${i % every === 0 ? 'major' : ''}" style="left:${pct(i * step, span)}"></span>`;
  }
  return html;
}

function marks(span) {
  return markers.map(t => `<span class="mark" style="left:${pct(t, span)}"></span>`).join('')
    + `<svg class="head" style="left:${pct(playhead, span)}"><use href="#i-marker"/></svg>`;
}

function renderRulers() {
  document.getElementById('programRuler').innerHTML = ticks(56, 0.2, 5, programSpan) + marks(programSpan);

  const labels = [':00:00', '00:00:05:00', '00:00:10:00', '00:00:15:00', '00:00:20:00'];
  document.getElementById('timelineRuler').innerHTML =
    labels.map((l, i) => `<span class="time-label" style="left:${pct(i * 5, timelineSpan)}">${l}</span>`).join('')
    + ticks(46, 0.5, 10, timelineSpan) + marks(timelineSpan)
    + `<span class="render-bar" style="width:${pct(11.1, timelineSpan)}"></span>`;
  document.getElementById('playLine').style.left = pct(playhead, timelineSpan);

  let mini = '';
  for (let i = 0; i < 8; i++) mini += `<span class="tick" style="left:${pct(22 + i * 27, 212)}"></span>`;
  mini += `<span class="mark" style="left:${pct(82, 212)}"></span><svg class="head" style="left:${pct(3, 212)}"><use href="#i-marker"/></svg>`;
  document.getElementById('miniRuler').insertAdjacentHTML('beforeend', mini);
}

function renderTracks() {
  let html = videoTracks.map(t => `
    <div class="track">
      <div class="track-head">
        <span class="patch ${t.name === 'V1' ? 'target' : ''}">${t.name === 'V1' ? 'V1' : ''}</span>
        ${icon('lock')}<span class="name ${t.name === 'V1' ? 'target' : ''}">${t.name}</span>${icon('sync')}${icon('eye')}
      </div>
      <div class="lane">
        <div class="clip ${t.look || ''}" style="left:${pct(t.from, timelineSpan)};width:${pct(t.to - t.from, timelineSpan)}">
          <span class="clip-label"><i class="fx badge ${t.badge}">fx</i>${t.clip}</span>
        </div>
      </div>
    </div>`).join('');
  html += '<div class="track gap"><div class="track-head"></div><div class="lane"></div></div>';
  html += ['A1', 'A2', 'A3'].map(n => `
    <div class="track audio">
      <div class="track-head">
        <span class="patch"></span>${icon('lock')}<span class="name target">${n}</span>${icon('sync')}
        <button>M</button><button>S</button>${icon('mic')}
      </div>
      <div class="lane"></div>
    </div>`).join('');
  html += `
    <div class="track master-out">
      <div class="track-head">
        <span class="patch"></span>${icon('lock')}<span class="name">主声道</span><span class="volume">0.0</span>
        <svg class="i-ends" viewBox="0 0 12 9"><path d="M0 0l5 3V0h2v3l5-3v9L7 6v3H5V6L0 9z" fill="currentColor"/></svg>
      </div>
      <div class="lane"></div>
    </div>`;
  document.getElementById('tracks').innerHTML = html;
}

function renderHistory() {
  document.getElementById('historyList').innerHTML = history.map(([type, text], i) => {
    const last = i === history.length - 1;
    const mark = type === 'fx' ? '<i class="fx">fx</i>' : icon(type);
    return `<li class="${last ? 'current' : ''}">${last ? '<span class="dot"></span>' : ''}${mark}${text}</li>`;
  }).join('');
}

function renderScale() {
  let html = '';
  for (let i = 0; i <= 60; i++) {
    html += `<span class="db-tick ${i % 6 === 0 ? 'major' : ''}" style="top:${pct(i, 60)}"></span>`;
    if (i % 6 === 0) html += `<span class="db" style="top:${pct(i, 60)}">${i === 60 ? 'dB' : -i || 0}</span>`;
  }
  document.getElementById('scale').innerHTML = html;
}

renderRulers();
renderTracks();
renderHistory();
renderScale();
```
